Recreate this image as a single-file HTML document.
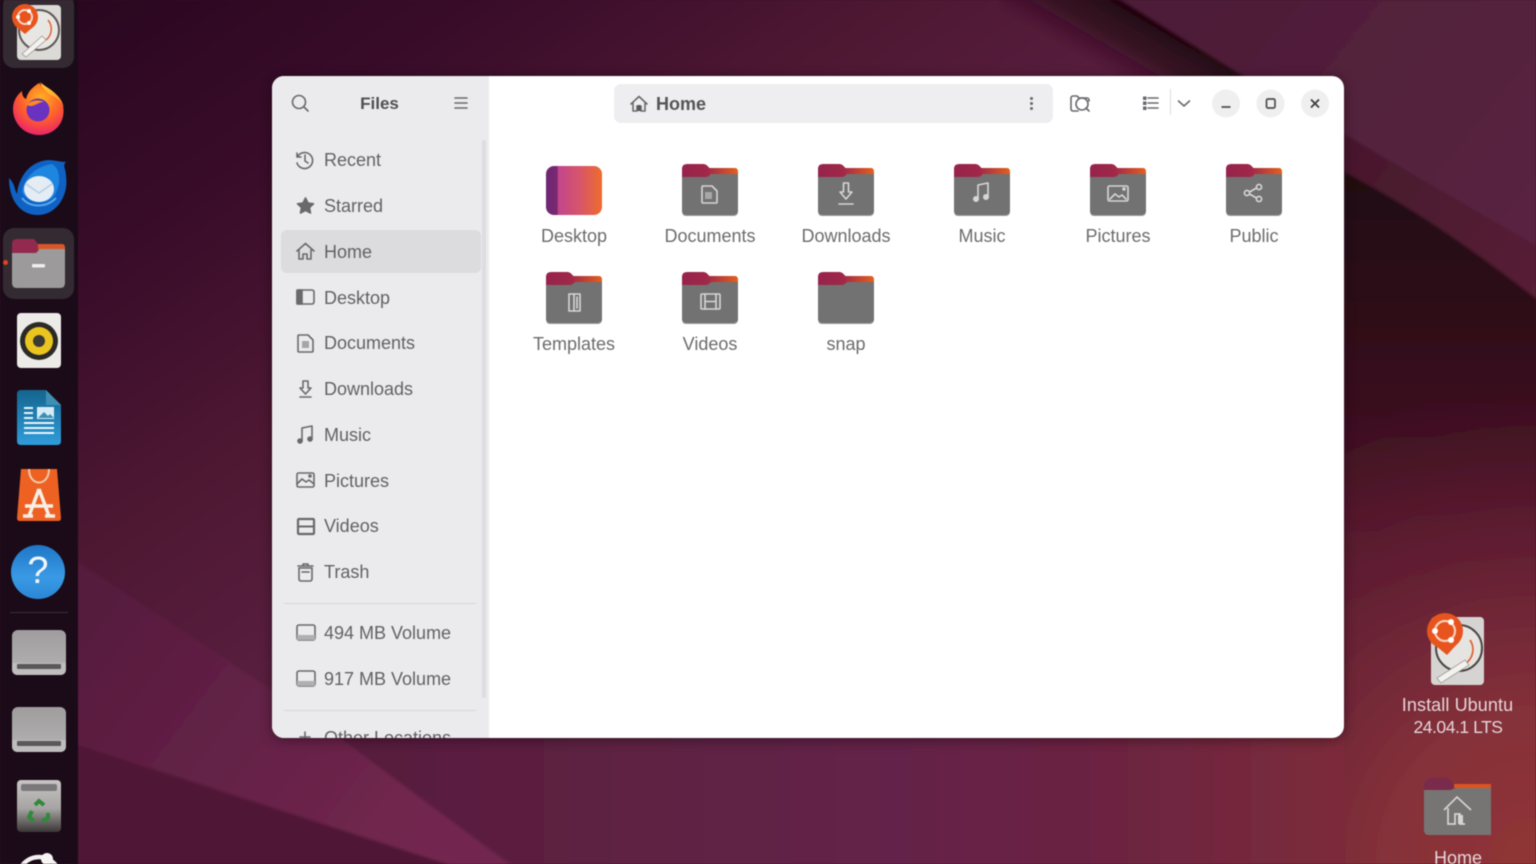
<!DOCTYPE html>
<html lang="en">
<head>
<meta charset="utf-8">
<title>Files - Home</title>
<style>
html,body{margin:0;padding:0;width:1536px;height:864px;overflow:hidden;background:#3a1028}
#root{position:absolute;left:0;top:0;width:1536px;height:864px;overflow:hidden;filter:blur(.65px);font-family:"Liberation Sans","DejaVu Sans",sans-serif}
svg{position:absolute;display:block;overflow:visible}
#win{position:absolute;left:272px;top:76px;width:1072px;height:662px;background:#fff;border-radius:12px;overflow:hidden;box-shadow:0 2px 12px rgba(0,0,0,.4)}
#side{position:absolute;left:0;top:0;width:217px;height:662px;background:#ebebed}
.t{position:absolute;white-space:nowrap;line-height:22px;height:22px}
.s{left:52px;font-size:18px;color:#626265}
.l{font-size:18px;color:#6c6c6e;text-align:center;width:136px}
.d{font-size:18px;color:#e6d5da;text-align:center;width:136px;left:1389px}
.ic{fill:none;stroke:#69696d;stroke-width:1.6;stroke-linecap:round;stroke-linejoin:round}
.fi{fill:none;stroke:#d6d6d6;stroke-width:1.6;stroke-linecap:round;stroke-linejoin:round}
</style>
</head>
<body>
<div id="root">

<!-- wallpaper -->
<svg width="1536" height="864" viewBox="0 0 1536 864" style="left:0;top:0;overflow:hidden">
<defs>
<filter id="soft" filterUnits="userSpaceOnUse" x="-100" y="-100" width="1800" height="1100"><feGaussianBlur stdDeviation="1.500"/></filter>
<linearGradient id="base" gradientUnits="userSpaceOnUse" x1="78" y1="0" x2="470" y2="575"><stop offset="0" stop-color="#2a0720"/><stop offset=".35" stop-color="#3a0d2a"/><stop offset=".665" stop-color="#4e1833"/><stop offset="1" stop-color="#5a2040"/></linearGradient>
<linearGradient id="shadowT" gradientUnits="userSpaceOnUse" x1="1175" y1="32" x2="1140" y2="92"><stop offset="0" stop-color="#1e0610" stop-opacity="1"/><stop offset=".5" stop-color="#2f0b1c" stop-opacity=".75"/><stop offset="1" stop-color="#3a1024" stop-opacity="0"/></linearGradient>
<linearGradient id="wedge" gradientUnits="userSpaceOnUse" x1="90" y1="580" x2="420" y2="830"><stop offset="0" stop-color="#551b3d"/><stop offset="1" stop-color="#72274f"/></linearGradient>
<linearGradient id="bot" gradientUnits="userSpaceOnUse" x1="272" y1="0" x2="1344" y2="0"><stop offset="0" stop-color="#561e3c"/><stop offset=".58" stop-color="#642248"/><stop offset=".82" stop-color="#6e2540"/><stop offset="1" stop-color="#7c2c3a"/></linearGradient>
<linearGradient id="rt" gradientUnits="userSpaceOnUse" x1="1200" y1="0" x2="1500" y2="240"><stop offset="0" stop-color="#4e1f38"/><stop offset="1" stop-color="#582140"/></linearGradient>
<linearGradient id="rm" gradientUnits="userSpaceOnUse" x1="0" y1="150" x2="0" y2="640"><stop offset="0" stop-color="#1e0710"/><stop offset=".3" stop-color="#2c0916"/><stop offset=".6" stop-color="#3e1022"/><stop offset=".85" stop-color="#54182c"/><stop offset="1" stop-color="#5e1e30"/></linearGradient>
<linearGradient id="band" gradientUnits="userSpaceOnUse" x1="1344" y1="140" x2="1536" y2="300"><stop offset="0" stop-color="#46182c"/><stop offset="1" stop-color="#582036"/></linearGradient>
<radialGradient id="rad" gradientUnits="userSpaceOnUse" cx="1536" cy="864" r="480"><stop offset="0" stop-color="#903535"/><stop offset=".3" stop-color="#86313a"/><stop offset=".5" stop-color="#742938" stop-opacity=".95"/><stop offset=".75" stop-color="#641f34" stop-opacity=".5"/><stop offset="1" stop-color="#5e1e30" stop-opacity="0"/></radialGradient>
<linearGradient id="fT" x1="0" y1="0" x2="1" y2="0"><stop offset="0" stop-color="#96234e"/><stop offset=".45" stop-color="#a02848"/><stop offset="1" stop-color="#e4601e"/></linearGradient>
<linearGradient id="dsk" x1="0" y1="0" x2="1" y2="0"><stop offset="0" stop-color="#6e2672"/><stop offset=".2" stop-color="#7a2a70"/><stop offset=".22" stop-color="#c2468e"/><stop offset=".6" stop-color="#d8556a"/><stop offset="1" stop-color="#ee6c2e"/></linearGradient>
<symbol id="folder" viewBox="0 0 56 52">
<path d="M0 14V5Q0 0 5 0H21Q24 0 26 2.500L27.500 4H53Q56 4 56 8V14Z" fill="url(#fT)"/>
<path d="M0 13H24Q26 13 27.500 11.500L29 10H56V47Q56 52 51 52H5Q0 52 0 47Z" fill="#737272"/>
<path d="M1 50.500Q3 51.500 6 51.500H50Q53 51.500 55 50" fill="none" stroke="#9a9a9a" stroke-width="1"/>
</symbol>
</defs>
<rect x="-50" y="-50" width="1700" height="1000" fill="url(#base)"/>
<g filter="url(#soft)">
<polygon points="272,730 1360,730 1360,900 272,900" fill="url(#bot)"/>
<polygon points="1344,120 1600,268 1600,900 1344,900" fill="url(#band)"/>
<path d="M1344,172 Q1450,225 1600,350 V900 H1344 Z" fill="url(#rm)"/>
<rect x="1344" y="380" width="260" height="560" fill="url(#rad)"/>
<polygon points="1000,-30 1090,-30 1280,82 1000,82" fill="url(#shadowT)"/>
<polygon points="1105,-10 1600,-10 1600,283 1344,134 1240,74" fill="url(#rt)"/>
<polygon points="-10,510 78,562 272,690 340,738 530,880 -10,880" fill="url(#wedge)"/>
<polygon points="-10,716 78,745 447,864 480,890 -10,890" fill="#4f1835"/>
</g>
</svg>

<!-- dock -->
<div style="position:absolute;left:0;top:0;width:78px;height:864px;background:#1b0b18"></div>
<div style="position:absolute;left:3px;top:-6px;width:71px;height:74px;border-radius:11px;background:#332a32"></div>
<div style="position:absolute;left:3px;top:228px;width:71px;height:71px;border-radius:11px;background:#332a32"></div>
<div style="position:absolute;left:3px;top:260px;width:5px;height:5px;border-radius:50%;background:#e0431f"></div>

<!-- dock: installer -->
<svg width="78" height="70" viewBox="0 0 78 70" style="left:0;top:0">
<rect x="17" y="5" width="44" height="55" rx="4" fill="#dcdad6"/>
<circle cx="39" cy="30" r="20" fill="#e8e6e2" stroke="#5c5654" stroke-width="2"/>
<path d="M48 20a14 14 0 0 1-2 20" fill="none" stroke="#e0623a" stroke-width="1.500"/>
<path d="M22 54L42 36L46 40L26 57Z" fill="#f4f2ef" stroke="#9c9a96" stroke-width=".8"/>
<circle cx="25" cy="17" r="13" fill="#e8541e"/>
<path d="M14 25L25 34L33 27Z" fill="#e8541e"/>
<circle cx="25" cy="17" r="7" fill="none" stroke="#f8d8c8" stroke-width="2"/>
<circle cx="18" cy="17" r="2" fill="#fff"/><circle cx="29" cy="11" r="2" fill="#fff"/><circle cx="29" cy="23" r="2" fill="#fff"/>
</svg>

<!-- dock: firefox -->
<svg width="78" height="70" viewBox="0 0 78 70" style="left:0;top:76px">
<defs>
<radialGradient id="ffx" cx=".55" cy=".3" r=".8"><stop offset="0" stop-color="#ffb31f"/><stop offset=".5" stop-color="#ff5f2c"/><stop offset="1" stop-color="#e6137b"/></radialGradient>
<linearGradient id="ffy" x1="0" y1="0" x2="0" y2="1"><stop offset="0" stop-color="#ffd23a"/><stop offset="1" stop-color="#ff8a1e"/></linearGradient>
</defs>
<path d="M39 7C44 13 56 14 62 26C68 44 56 59 39 59C24 59 13 47 13 33C13 25 17 19 22 15C22 20 24 22 26 23C28 15 33 11 39 7Z" fill="url(#ffx)"/>
<path d="M40 6C46 12 60 16 64 32C62 26 56 20 50 19C46 15 42 11 40 6Z" fill="url(#ffy)"/>
<circle cx="38" cy="34" r="11.500" fill="#6a32c0"/>
<path d="M27 29C31 24 39 23 44 26C38 26 36 30 30 30Z" fill="#ff8a1e"/>
</svg>

<!-- dock: thunderbird -->
<svg width="78" height="70" viewBox="0 0 78 70" style="left:0;top:154px">
<path d="M9 24C15 30 14 34 17 40C18 28 26 8 48 6C54 6 60 8 66 8C62 12 66 14 66 22C69 42 56 61 38 61C20 61 9 46 9 24Z" fill="#0f62c4"/>
<path d="M22 38C24 22 38 12 52 10C60 14 62 30 54 42C46 52 28 50 22 38Z" fill="#1f86e0"/>
<ellipse cx="39" cy="35" rx="15" ry="13" fill="#e4ecf4"/>
<path d="M26 30L39 39L52 30" fill="none" stroke="#b6cde4" stroke-width="1.500"/>
<path d="M22 44C30 54 46 54 56 44" fill="none" stroke="#57a8ee" stroke-width="2"/>
</svg>

<!-- dock: files -->
<svg width="54" height="50" viewBox="0 0 54 50" style="left:12px;top:239px">
<path d="M0 18V5Q0 0 5 0H22L26 5H50Q53 5 53 9V18Z" fill="#93294f"/>
<path d="M26 5H50Q53 5 53 9V11H26Z" fill="#d9562a"/>
<path d="M0 14H24L28 10H53V44Q53 49 48 49H5Q0 49 0 44Z" fill="#9c9a9a"/>
<rect x="20" y="25" width="13" height="3.500" rx="1" fill="#eeeeee"/>
</svg>

<!-- dock: rhythmbox -->
<svg width="44" height="55" viewBox="0 0 44 55" style="left:17px;top:313px">
<rect width="44" height="55" rx="4" fill="#ecebe8"/>
<circle cx="22" cy="28" r="19" fill="#2c2a26"/>
<circle cx="22" cy="28" r="14" fill="#ebc51f"/>
<circle cx="22" cy="28" r="6" fill="#3c3a34"/>
</svg>

<!-- dock: writer -->
<svg width="44" height="55" viewBox="0 0 44 55" style="left:17px;top:390px">
<defs><linearGradient id="wr" x1="0" y1="0" x2="0" y2="1"><stop offset="0" stop-color="#14658e"/><stop offset="1" stop-color="#2f9ddb"/></linearGradient></defs>
<path d="M4 0H29L44 15V51Q44 55 40 55H4Q0 55 0 51V4Q0 0 4 0Z" fill="url(#wr)"/>
<path d="M29 0L44 15H29Z" fill="#3f8fb5"/>
<path d="M7 18H16M7 23H16M7 28H16M7 33H37M7 38H37M7 43H37" stroke="#e8f4fa" stroke-width="2"/>
<rect x="20" y="17" width="17" height="12" fill="#d4ecf8"/>
<path d="M21 28L27 22L31 26L33 24L37 28Z" fill="#3f8fb5"/>
</svg>

<!-- dock: app store -->
<svg width="44" height="52" viewBox="0 0 44 52" style="left:17px;top:469px">
<path d="M4 0H40L44 49Q44 52 41 52H3Q0 52 0 49Z" fill="#ed6223"/>
<path d="M12 0C12 18 32 18 32 0" fill="none" stroke="#f3c9a8" stroke-width="2"/>
<path d="M22 20L12 47M22 20L32 47M8 37H36M6 47H16M28 47H38" fill="none" stroke="#f8efe6" stroke-width="3.500"/>
</svg>

<!-- dock: help -->
<div style="position:absolute;left:11px;top:545px;width:54px;height:54px;border-radius:50%;background:linear-gradient(#1e76c8,#3a9ae4 60%,#2a86d6)"></div>
<div class="t" style="left:11px;top:553px;width:54px;height:36px;line-height:36px;text-align:center;color:#f2f6fa;font-size:38px">?</div>

<div style="position:absolute;left:10px;top:612px;width:58px;height:1px;background:#3a2d38"></div>

<!-- dock: drives -->
<svg width="54" height="46" viewBox="0 0 54 46" style="left:12px;top:630px">
<defs><linearGradient id="drv" x1="0" y1="0" x2="0" y2="1"><stop offset="0" stop-color="#9f9d9d"/><stop offset="1" stop-color="#b4b2b2"/></linearGradient></defs>
<rect width="54" height="45" rx="6" fill="url(#drv)"/>
<path d="M0 33H54V39Q54 45 48 45H6Q0 45 0 39Z" fill="#bfbdbd"/>
<rect x="5" y="34" width="44" height="5" rx="1" fill="#5a585a"/>
</svg>
<svg width="54" height="46" viewBox="0 0 54 46" style="left:12px;top:707px">
<rect width="54" height="45" rx="6" fill="url(#drv)"/>
<path d="M0 33H54V39Q54 45 48 45H6Q0 45 0 39Z" fill="#bfbdbd"/>
<rect x="5" y="34" width="44" height="5" rx="1" fill="#5a585a"/>
</svg>

<!-- dock: trash -->
<svg width="44" height="52" viewBox="0 0 44 52" style="left:17px;top:780px">
<defs><linearGradient id="tr" x1="0" y1="0" x2="0" y2="1"><stop offset="0" stop-color="#c8c6c4"/><stop offset=".55" stop-color="#a6a4a2"/><stop offset="1" stop-color="#3a3636"/></linearGradient></defs>
<rect width="44" height="52" rx="4" fill="url(#tr)"/>
<rect x="4" y="4" width="36" height="7" rx="2" fill="#7a787a"/>
<path d="M18 25L22 21L27 25M31 33L31 38L25 41M17 41L12 37L15 31" fill="none" stroke="#2f8a3a" stroke-width="4"/>
</svg>

<!-- dock: ubuntu logo -->
<svg width="78" height="24" viewBox="0 0 78 24" style="left:0;top:840px;overflow:hidden">
<circle cx="39" cy="38" r="21" fill="none" stroke="#f4f0f0" stroke-width="4.500" stroke-dasharray="50 16" stroke-dashoffset="58"/>
<circle cx="47" cy="19" r="6" fill="#f8f4f4"/>
</svg>

<!-- window -->
<div id="win">
<div id="side"></div>
<div style="position:absolute;left:9px;top:154px;width:200px;height:43px;border-radius:6px;background:#dcdcde"></div>
<div style="position:absolute;left:210px;top:64px;width:3.500px;height:558px;border-radius:2px;background:#dddddf"></div>
<div style="position:absolute;left:12px;top:527px;width:192px;height:1px;background:#d6d6d8"></div>
<div style="position:absolute;left:12px;top:634px;width:192px;height:1px;background:#d6d6d8"></div>

<div class="t" style="left:0;top:17px;width:215px;text-align:center;font-size:17px;font-weight:bold;color:#505052">Files</div>

<div class="t s" style="top:73px">Recent</div>
<div class="t s" style="top:118.500px">Starred</div>
<div class="t s" style="top:164.500px">Home</div>
<div class="t s" style="top:210.500px">Desktop</div>
<div class="t s" style="top:255.500px">Documents</div>
<div class="t s" style="top:301.500px">Downloads</div>
<div class="t s" style="top:347.500px">Music</div>
<div class="t s" style="top:393.500px">Pictures</div>
<div class="t s" style="top:439px">Videos</div>
<div class="t s" style="top:484.500px">Trash</div>
<div class="t s" style="top:546px">494 MB Volume</div>
<div class="t s" style="top:592px">917 MB Volume</div>
<div class="t s" style="top:651px;height:11px;overflow:hidden">Other Locations</div>

<!-- sidebar icons -->
<svg width="217" height="662" viewBox="272 76 217 662" style="left:0;top:0;overflow:hidden">
<g class="ic">
<circle cx="299" cy="102" r="6.500"/><path d="M304 107L308 111"/>
<path d="M455 98H467M455 103H467M455 108H467"/>
<path d="M298 156a8 8 0 1 1-1 7M297 153v4h4M305 155v6l3 2"/>
<path d="M305.500 198l2.500 5 5.500.8-4 3.800 1 5.400-5-2.600-5 2.600 1-5.400-4-3.800 5.500-.8z" fill="#69696d"/>
<path d="M297 251l8.500-7.500 8.500 7.500M299 250v9h4v-5h4v5h4v-9"/>
<rect x="297" y="290" width="17" height="14" rx="2"/><rect x="297" y="290" width="5" height="14" fill="#69696d"/>
<path d="M299 335h9l5 5v11a1 1 0 0 1-1 1h-13a1 1 0 0 1-1-1v-15a1 1 0 0 1 1-1z"/><rect x="302" y="341" width="7" height="7" fill="#a5a5a8" stroke="none"/>
<path d="M303 381h5v7h3l-5.500 6-5.500-6h3zM300 397h11"/>
<path d="M302 441v-13l10-2v13"/><circle cx="300" cy="441" r="2" fill="#69696d"/><circle cx="310" cy="439" r="2" fill="#69696d"/>
<rect x="297" y="473" width="17" height="14" rx="1.500"/><path d="M297 484l5-5 4 3 3-2 5 4"/><circle cx="310" cy="476" r="1"/>
<rect x="298" y="519" width="16" height="15" rx="1" stroke-width="2.200"/><path d="M298 526.500h16" stroke-width="2"/>
<path d="M299 568h13v11a2 2 0 0 1-2 2h-9a2 2 0 0 1-2-2zM298 566h15M303 566v-2h5v2M302 572h7"/>
<rect x="297" y="625" width="18" height="15" rx="2"/><rect x="297" y="635" width="18" height="5" fill="#b0b0b2" stroke="none"/>
<rect x="297" y="671" width="18" height="15" rx="2"/><rect x="297" y="681" width="18" height="5" fill="#b0b0b2" stroke="none"/>
<path d="M305 732v6M300 737h10"/>
</g>
</svg>

<!-- path bar -->
<div style="position:absolute;left:342px;top:8px;width:439px;height:39px;border-radius:7px;background:#eeeef0"></div>
<div class="t" style="left:384px;top:16.500px;font-size:18px;font-weight:bold;color:#555557">Home</div>

<!-- header icons -->
<svg width="855" height="60" viewBox="489 76 855 60" style="left:217px;top:0">
<g class="ic">
<path d="M631 104l8-7.500 8 7.500M633 103v8h4v-5h4v5h4v-8"/>
<path d="M1078 111h-5a2 2 0 0 1-2-2v-11a2 2 0 0 1 2-2h4l2 2h8a2 2 0 0 1 2 2v1"/>
<circle cx="1082" cy="104" r="6"/><path d="M1086 108l3 3"/>
<path d="M1148 98h10M1148 103h10M1148 108h10"/>
<path d="M1178.500 101l5.500 5 5.500-5"/>
</g>
<rect x="637.500" y="105" width="3" height="6" fill="#555557"/>
<g fill="#69696d">
<circle cx="1031.500" cy="98.500" r="1.500"/><circle cx="1031.500" cy="103.500" r="1.500"/><circle cx="1031.500" cy="108.500" r="1.500"/>
<rect x="1143" y="96.500" width="3.500" height="3.500"/><rect x="1143" y="101.500" width="3.500" height="3.500"/><rect x="1143" y="106.500" width="3.500" height="3.500"/>
</g>
<rect x="1170" y="89" width="1" height="26" fill="#dcdcdc"/>
<circle cx="1226" cy="103.500" r="14" fill="#efeff0"/>
<circle cx="1270.500" cy="103.500" r="14" fill="#efeff0"/>
<circle cx="1315" cy="103.500" r="14" fill="#efeff0"/>
<path d="M1221.500 107h9" stroke="#4c4c4e" stroke-width="1.700" fill="none"/>
<rect x="1266.500" y="99" width="8.500" height="9" rx="1.500" stroke="#4c4c4e" stroke-width="1.700" fill="none"/>
<path d="M1311 99.500l8 8M1319 99.500l-8 8" stroke="#3c3c3e" stroke-width="1.800" fill="none"/>
</svg>

<!-- folders -->
<svg width="855" height="250" viewBox="489 76 855 250" style="left:217px;top:0">
<rect x="546" y="166" width="56" height="49" rx="8" fill="url(#dsk)"/>
<use href="#folder" x="682" y="164" width="56" height="52"/>
<use href="#folder" x="818" y="164" width="56" height="52"/>
<use href="#folder" x="954" y="164" width="56" height="52"/>
<use href="#folder" x="1090" y="164" width="56" height="52"/>
<use href="#folder" x="1226" y="164" width="56" height="52"/>
<use href="#folder" x="546" y="272" width="56" height="52"/>
<use href="#folder" x="682" y="272" width="56" height="52"/>
<use href="#folder" x="818" y="272" width="56" height="52"/>
<g class="fi">
<path d="M703 186h9l5 5v11a1 1 0 0 1-1 1h-13a1 1 0 0 1-1-1v-15a1 1 0 0 1 1-1z"/><rect x="705" y="192" width="7" height="7" fill="#a8a8a8" stroke="none"/>
<path d="M843.500 183h5v9h3.500l-6 7-6-7h3.500zM839 204h14"/>
<path d="M978 199v-14l10-2v14"/><circle cx="976" cy="199" r="2.200" fill="#d6d6d6"/><circle cx="986" cy="197" r="2.200" fill="#d6d6d6"/>
<rect x="1108" y="186" width="20" height="15" rx="1.500"/><path d="M1110 199l5-5 4 3 3-2 4 4"/><circle cx="1124" cy="189" r="1"/>
<circle cx="1247" cy="193" r="2.600"/><circle cx="1259" cy="187" r="2.600"/><circle cx="1259" cy="199" r="2.600"/><path d="M1249.500 192l7-4M1249.500 194l7 4"/>
<path d="M569 294h5v17h-5zM574 294h6v17h-6M577 297v11"/>
<rect x="701" y="294" width="19" height="15" rx="1"/><path d="M705 294v15M716 294v15M705 301.500h11"/>
</g>
</svg>

<div class="t l" style="left:234px;top:148.500px">Desktop</div>
<div class="t l" style="left:370px;top:148.500px">Documents</div>
<div class="t l" style="left:506px;top:148.500px">Downloads</div>
<div class="t l" style="left:642px;top:148.500px">Music</div>
<div class="t l" style="left:778px;top:148.500px">Pictures</div>
<div class="t l" style="left:914px;top:148.500px">Public</div>
<div class="t l" style="left:234px;top:256.500px">Templates</div>
<div class="t l" style="left:370px;top:256.500px">Videos</div>
<div class="t l" style="left:506px;top:256.500px">snap</div>
</div>

<!-- desktop icons -->
<svg width="90" height="90" viewBox="1420 605 90 90" style="left:1420px;top:605px">
<rect x="1431" y="617" width="53" height="68" rx="4" fill="#d6d4d2"/>
<circle cx="1459" cy="648" r="23" fill="#e6e4e0" stroke="#4a4644" stroke-width="2"/>
<path d="M1470 640a17 17 0 0 1-10 26" fill="none" stroke="#e0623a" stroke-width="1.800"/>
<path d="M1437 678L1465 660L1469 665L1441 683Z" fill="#f4f2ef" stroke="#9c9a96" stroke-width=".8"/>
<circle cx="1445" cy="631" r="18" fill="#e8541e"/>
<path d="M1431 642L1447 655L1459 642Z" fill="#e8541e"/>
<circle cx="1445" cy="631" r="10" fill="none" stroke="#f8d0b8" stroke-width="2.200"/>
<circle cx="1435" cy="631" r="3" fill="#fff"/><circle cx="1451" cy="622" r="3" fill="#fff"/><circle cx="1451" cy="640" r="3" fill="#fff"/>
</svg>
<div class="t d" style="top:694px;left:1389.500px;letter-spacing:.1px">Install Ubuntu</div>
<div class="t d" style="top:716px;left:1390px;font-size:17.500px;letter-spacing:-.45px">24.04.1 LTS</div>

<svg width="68" height="60" viewBox="0 0 68 60" style="left:1424px;top:778px">
<path d="M0 16V6Q2 2 6 0H24L30 6H67V16Z" fill="#7a2a4a"/>
<path d="M30 6H67V10H30Z" fill="#dd5420"/>
<path d="M0 12H26L32 10H67V57H5Q0 57 0 52Z" fill="#777574"/>
<path d="M20 32L33 19L47 32M24 30V46H31V36H36V46H41" fill="none" stroke="#d4d4d2" stroke-width="1.700"/>
<rect x="34" y="37" width="5" height="9" fill="#d4d4d2"/>
</svg>
<div class="t d" style="top:847px;left:1390px;height:17px;overflow:hidden">Home</div>

</div>
</body>
</html>
